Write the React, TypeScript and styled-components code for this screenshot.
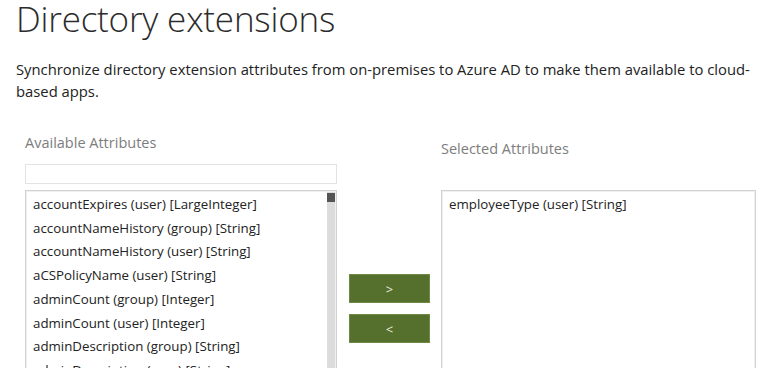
import styled, { createGlobalStyle } from "styled-components"

const available = [
  "accountExpires (user) [LargeInteger]",
  "accountNameHistory (group) [String]",
  "accountNameHistory (user) [String]",
  "aCSPolicyName (user) [String]",
  "adminCount (group) [Integer]",
  "adminCount (user) [Integer]",
  "adminDescription (group) [String]",
  "adminDescription (user) [String]",
  "adminDisplayName (group) [String]",
]

const selected = ["employeeType (user) [String]"]

const GlobalStyle = createGlobalStyle`
  html, body {
    margin: 0;
    padding: 0;
    background: #ffffff;
    overflow: hidden;
  }
  body {
    font-family: "Open Sans", "Noto Sans", sans-serif;
    color: #222222;
  }
`

const App = () => {
  return (
    <Page>
      <GlobalStyle />
      <Title>Directory extensions</Title>
      <Description>
        Synchronize directory extension attributes from on-premises to Azure AD to make them
        available to cloud-based apps.
      </Description>
      <Picker>
        <Column>
          <Label>Available Attributes</Label>
          <SearchInput />
          <ListBox>
            <Items>
              {available.map((item) => (
                <Item key={item}>{item}</Item>
              ))}
            </Items>
            <ScrollTrack>
              <ScrollThumb />
            </ScrollTrack>
          </ListBox>
        </Column>
        <Buttons>
          <MoveButton>&gt;</MoveButton>
          <MoveButton>&lt;</MoveButton>
        </Buttons>
        <Column>
          <Label $offset>Selected Attributes</Label>
          <ListBox>
            <Items>
              {selected.map((item) => (
                <Item key={item}>{item}</Item>
              ))}
            </Items>
          </ListBox>
        </Column>
      </Picker>
    </Page>
  )
}

export default App

const Page = styled.div`
  padding: 0 0 0 16px;
  width: 768px;
  height: 368px;
  box-sizing: border-box;
  overflow: hidden;
`

const Title = styled.h1`
  margin: 0;
  font-size: 35px;
  font-weight: 300;
  line-height: 38px;
  letter-spacing: -0.2px;
  color: #2b2b2b;
`

const Description = styled.p`
  margin: 20px 0 0;
  width: 744px;
  font-size: 14.8px;
  line-height: 22px;
  color: #222222;
`

const Picker = styled.div`
  display: grid;
  grid-template-columns: 312px 104px 315px;
  margin: 32px 0 0 9px;
`

const Column = styled.div`
  display: flex;
  flex-direction: column;
`

const Label = styled.div<{ $offset?: boolean }>`
  font-size: 14.5px;
  line-height: 18px;
  color: #7d7d7d;
  margin-top: ${({ $offset }) => ($offset ? "6px" : "0")};
  margin-bottom: ${({ $offset }) => ($offset ? "32px" : "12px")};
`

const SearchInput = styled.input`
  box-sizing: border-box;
  height: 20px;
  width: 100%;
  margin: 0 0 6px;
  border: 1px solid #e3e3e3;
  outline: none;
  padding: 0 6px;
`

const ListBox = styled.div`
  display: flex;
  height: 200px;
  border: 1px solid #d2d2d2;
  box-shadow: inset 0 0 0 1px #f0f0f0;
`

const Items = styled.div`
  flex: 1;
  padding: 2px 0 0 7px;
`

const Item = styled.div`
  font-size: 13.3px;
  line-height: 23.7px;
  color: #222222;
  white-space: nowrap;
`

const ScrollTrack = styled.div`
  width: 8px;
  margin: 1px 1px 0 0;
  background: #dcdcdc;
`

const ScrollThumb = styled.div`
  height: 9px;
  margin-top: 1px;
  background: #555555;
`

const Buttons = styled.div`
  display: flex;
  flex-direction: column;
  gap: 11px;
  padding: 140px 11px 0 12px;
`

const MoveButton = styled.button`
  height: 29px;
  border: 1px solid #6f8a45;
  background: #556f2c;
  color: #e8eedf;
  font-family: "Open Sans", sans-serif;
  font-size: 13px;
  padding: 0;
  cursor: pointer;
`
